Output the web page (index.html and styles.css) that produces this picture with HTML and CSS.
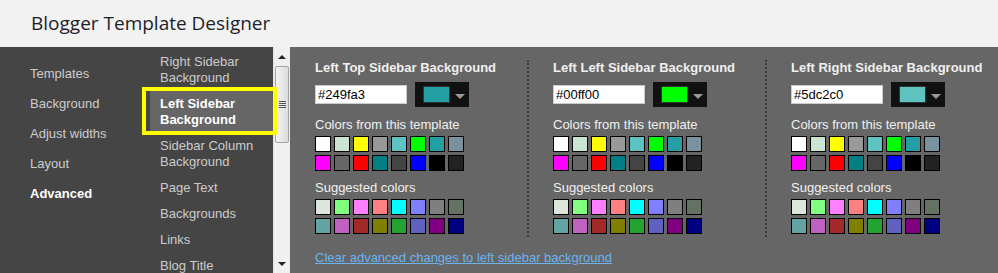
FILE: index.html
```html
<!DOCTYPE html>
<html lang="en">
<head>
  <meta charset="UTF-8">
  <title>Blogger Template Designer</title>
  <link rel="stylesheet" href="styles.css">
</head>
<body>

  <div class="header">
    <h1 class="title">Blogger Template Designer</h1>
  </div>

  <div class="workspace">
    <div class="sidebar">
      <ul class="nav-main">
        <li>Templates</li>
        <li>Background</li>
        <li>Adjust widths</li>
        <li>Layout</li>
        <li class="active">Advanced</li>
      </ul>
      <ul class="nav-sub">
        <li>Right Sidebar Background</li>
        <li class="selected">Left Sidebar Background</li>
        <li>Sidebar Column Background</li>
        <li>Page Text</li>
        <li>Backgrounds</li>
        <li>Links</li>
        <li>Blog Title</li>
      </ul>
      <div class="highlight"></div>
    </div>

    <div class="scrollbar">
      <div class="scroll-arrow"><span class="arrow-up"></span></div>
      <div class="scroll-thumb"><span class="grip"></span></div>
      <div class="scroll-track"></div>
      <div class="scroll-arrow"><span class="arrow-down"></span></div>
    </div>

    <div class="panel">
      <div class="columns" id="columns"></div>
      <a class="clear-link" href="#">Clear advanced changes to left sidebar background</a>
    </div>
  </div>

  <script>
    // Swatch palettes
    const templateColors = [
      '#ffffff', '#cce5d0', '#ffff00', '#999999', '#5dc2c0', '#00ff00', '#249fa3', '#7a919e',
      '#ff00ff', '#666666', '#ff0000', '#007f85', '#444444', '#0000ff', '#000000', '#222222'
    ];
    const suggestedColors = [
      '#dce6dc', '#80ff80', '#ff80ff', '#ff8080', '#00ffff', '#8080ff', '#7f7f7f', '#637263',
      '#62a3a3', '#c060c0', '#a32828', '#808000', '#22a332', '#6060c0', '#800080', '#000080'
    ];

    const pickers = [
      { title: 'Left Top Sidebar Background', value: '#249fa3' },
      { title: 'Left Left Sidebar Background', value: '#00ff00' },
      { title: 'Left Right Sidebar Background', value: '#5dc2c0' }
    ];

    const swatchGrid = (colors) => {
      return '<div class="swatches">' + colors.map(c =>
        `<span class="swatch" style="background-color: ${c}"></span>`
      ).join('') + '</div>';
    };

    const columns = document.getElementById('columns');
    pickers.forEach(p => {
      const col = document.createElement('div');
      col.className = 'column';
      col.innerHTML = `
        <div class="column-title">${p.title}</div>
        <div class="picker-row">
          <input class="hex-input" type="text" value="${p.value}">
          <div class="color-button">
            <span class="current-color" style="background-color: ${p.value}"></span>
            <span class="drop-arrow"></span>
          </div>
        </div>
        <div class="label">Colors from this template</div>
        ${swatchGrid(templateColors)}
        <div class="label label-suggested">Suggested colors</div>
        ${swatchGrid(suggestedColors)}
      `;
      columns.appendChild(col);
    });
  </script>

</body>
</html>
```

FILE: styles.css
```css
/* Page frame */
body {
  margin: 0;
  background-color: #666;
  font-family: "Liberation Sans", Arial, sans-serif;
  font-size: 13px;
  overflow: hidden;
}

.header {
  height: 47px;
  background-color: #f2f2f2;
  box-sizing: border-box;
  padding: 10px 0 0 31px;
}

.title {
  margin: 0;
  font-family: "Open Sans", sans-serif;
  font-weight: normal;
  font-size: 19px;
  line-height: 26px;
  color: #1e1e2a;
}

.workspace {
  display: flex;
  height: 226px;
  overflow: hidden;
}

/* Left navigation */
.sidebar {
  position: relative;
  display: flex;
  width: 273px;
  flex-shrink: 0;
  background-color: #454545;
}

ul {
  list-style: none;
  margin: 0;
  padding: 0;
}

.nav-main {
  width: 150px;
  box-sizing: border-box;
  padding: 12px 0 0 30px;
}

.nav-main li {
  line-height: 30px;
  color: #ccc;
}

.nav-main li.active {
  color: #fff;
  font-weight: bold;
}

.nav-sub {
  width: 123px;
  padding-top: 2px;
}

.nav-sub li {
  padding: 5px 10px;
  line-height: 16px;
  color: #ccc;
}

.nav-sub li.selected {
  background-color: #666;
  color: #fff;
  font-weight: bold;
}

.highlight {
  position: absolute;
  left: 142px;
  top: 40px;
  width: 127px;
  height: 40px;
  border: 4px solid #ffff00;
  z-index: 2;
}

/* Fake scrollbar */
.scrollbar {
  display: flex;
  flex-direction: column;
  width: 17px;
  flex-shrink: 0;
  background-color: #f0f0f0;
  border-left: 1px solid #e2e2e2;
  box-sizing: border-box;
}

.scroll-arrow {
  height: 19px;
  display: flex;
  justify-content: center;
  align-items: center;
}

.arrow-up,
.arrow-down {
  width: 0;
  height: 0;
  border-left: 4px solid transparent;
  border-right: 4px solid transparent;
}

.arrow-up {
  border-bottom: 4px solid #222;
}

.arrow-down {
  border-top: 4px solid #222;
}

.scroll-thumb {
  height: 77px;
  margin: 0 1px;
  border: 1px solid #a3a3a3;
  border-radius: 2px;
  background: linear-gradient(to right, #f4f4f4, #dcdcdc);
  box-sizing: border-box;
  display: flex;
  justify-content: center;
  align-items: center;
}

.grip {
  width: 7px;
  height: 7px;
  background: repeating-linear-gradient(to bottom, #555 0, #555 1px, transparent 1px, transparent 2px);
}

.scroll-track {
  flex: 1;
}

/* Colour pickers */
.panel {
  flex: 1;
  padding: 13px 0 0 25px;
  overflow: hidden;
}

.columns {
  display: flex;
}

.column {
  width: 212px;
  flex-shrink: 0;
  height: 177px;
}

.column + .column {
  border-left: 2px dotted #3a3a3a;
  padding-left: 24px;
}

.column-title {
  line-height: 16px;
  font-weight: bold;
  color: #f0f0f0;
  white-space: nowrap;
}

.picker-row {
  display: flex;
  align-items: center;
  margin-top: 6px;
}

.hex-input {
  width: 92px;
  height: 19px;
  box-sizing: border-box;
  margin: 0;
  padding: 0 2px;
  border: 1px solid #ccc;
  font-family: "Liberation Sans", Arial, sans-serif;
  font-size: 13px;
  color: #000;
}

.color-button {
  display: flex;
  align-items: center;
  width: 54px;
  height: 25px;
  box-sizing: border-box;
  margin-left: 8px;
  padding-left: 8px;
  background-color: #111;
}

.current-color {
  width: 27px;
  height: 17px;
  box-sizing: border-box;
  border: 1px solid #333;
}

.drop-arrow {
  margin-left: 5px;
  margin-top: 3px;
  width: 0;
  height: 0;
  border-left: 5px solid transparent;
  border-right: 5px solid transparent;
  border-top: 5px solid #999;
}

.label {
  margin-top: 10px;
  line-height: 16px;
  color: #f0f0f0;
}

.label-suggested {
  margin-top: 9px;
}

.swatches {
  display: grid;
  grid-template-columns: repeat(8, 16px);
  gap: 3px;
  margin-top: 3px;
}

.swatch {
  width: 16px;
  height: 16px;
  box-sizing: border-box;
  border: 1px solid #000;
}

.clear-link {
  display: inline-block;
  margin-top: 13px;
  line-height: 16px;
  color: #6ab4f0;
}
```
